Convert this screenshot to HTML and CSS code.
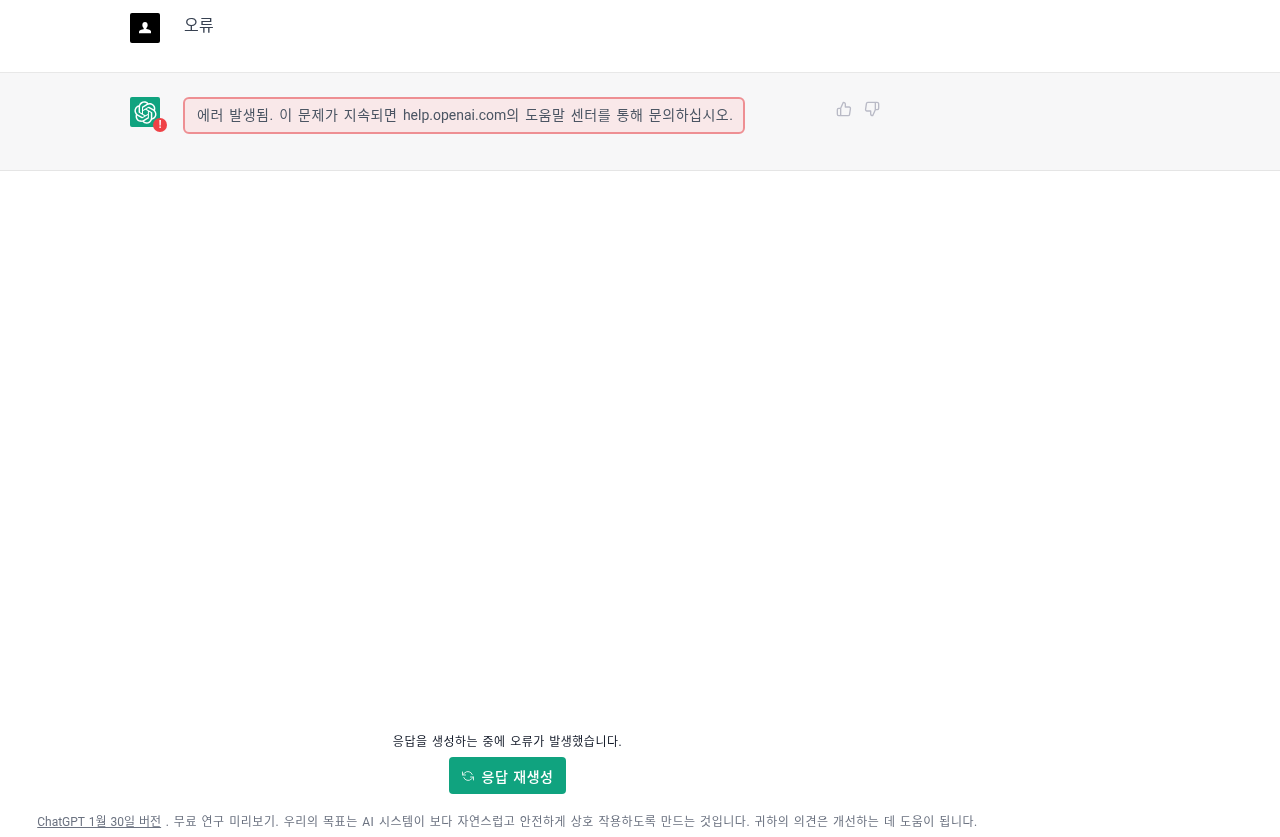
FILE: index.html
```html
<!DOCTYPE html>
<html lang="ko">
<head>
<meta charset="utf-8">
<title>ChatGPT</title>
<link rel="stylesheet" href="styles.css">
</head>
<body>
<div class="page">
  <section class="row row-user">
    <div class="col">
      <div class="avatar avatar-user">
        <svg viewBox="0 0 24 24" class="user-icon"><path d="M12 3c2.500 0 4 1.800 4 4.500 0 2-.8 3.700-2 4.500v1.500c3 .5 7 1.700 7 3.500V20H3v-2.500c0-1.800 4-3 7-3.500v-2c-1.200-.8-2-2.500-2-4.500C8 4.800 9.500 3 12 3z"/></svg>
      </div>
      <div class="user-text">오류</div>
    </div>
  </section>
  <section class="row row-bot">
    <div class="col">
      <div class="avatar avatar-bot">
        <svg viewBox="0 0 41 41" class="logo"><path d="M37.5324 16.8707C37.9808 15.5241 38.1363 14.0974 37.9886 12.6859C37.8409 11.2744 37.3934 9.91076 36.676 8.68622C35.6126 6.83404 33.9882 5.3676 32.0373 4.4985C30.0864 3.62941 27.9098 3.40259 25.8215 3.85078C24.8796 2.7893 23.7219 1.94125 22.4257 1.36341C21.1295 0.785575 19.7249 0.491269 18.3058 0.500197C16.1708 0.495044 14.0893 1.16803 12.3614 2.42214C10.6335 3.67624 9.34853 5.44666 8.6917 7.47815C7.30085 7.76286 5.98686 8.3414 4.8377 9.17505C3.68854 10.0087 2.73073 11.0782 2.02839 12.312C0.956464 14.1591 0.498905 16.2988 0.721698 18.4228C0.944492 20.5467 1.83612 22.5449 3.268 24.1293C2.81966 25.4759 2.66413 26.9026 2.81182 28.3141C2.95951 29.7256 3.40701 31.0892 4.12437 32.3138C5.18791 34.1659 6.8123 35.6322 8.76321 36.5013C10.7141 37.3704 12.8907 37.5973 14.9789 37.1492C15.9208 38.2107 17.0786 39.0587 18.3747 39.6366C19.6709 40.2144 21.0755 40.5087 22.4946 40.4998C24.6307 40.5054 26.7133 39.8321 28.4418 38.5772C30.1704 37.3223 31.4556 35.5506 32.1119 33.5179C33.5027 33.2332 34.8167 32.6547 35.9659 31.821C37.115 30.9874 38.0728 29.9178 38.7752 28.684C39.8458 26.8371 40.3023 24.6979 40.0789 22.5748C39.8556 20.4517 38.9639 18.4544 37.5324 16.8707ZM22.4978 37.8849C20.7443 37.8874 19.0459 37.2733 17.6994 36.1501C17.7601 36.117 17.8666 36.0586 17.936 36.0161L25.9004 31.4156C26.1003 31.3019 26.2663 31.137 26.3813 30.9378C26.4964 30.7386 26.5563 30.5124 26.5549 30.2825V19.0542L29.9213 20.998C29.9389 21.0068 29.9541 21.0198 29.9656 21.0359C29.977 21.052 29.9842 21.0707 29.9867 21.0902V30.3889C29.9842 32.375 29.1946 34.2791 27.7909 35.6841C26.3872 37.0892 24.4838 37.8806 22.4978 37.8849ZM6.39227 31.0064C5.51397 29.4888 5.19742 27.7107 5.49804 25.9832C5.55718 26.0187 5.66048 26.0818 5.73461 26.1244L13.699 30.7248C13.8975 30.8408 14.1233 30.902 14.3532 30.902C14.583 30.902 14.8088 30.8408 15.0073 30.7248L24.731 25.1103V28.9979C24.7321 29.0177 24.7283 29.0376 24.7199 29.0556C24.7115 29.0736 24.6988 29.0893 24.6829 29.1012L16.6317 33.7497C14.9096 34.7416 12.8643 35.0097 10.9447 34.4954C9.02506 33.9811 7.38785 32.7263 6.39227 31.0064ZM4.29707 13.6194C5.17156 12.0998 6.55279 10.9364 8.19885 10.3327C8.19885 10.4013 8.19491 10.5236 8.19491 10.6082V19.8154C8.19351 20.0452 8.25334 20.2712 8.36823 20.4703C8.48312 20.6693 8.64893 20.8341 8.84863 20.9479L18.5723 26.5624L15.206 28.5062C15.1894 28.5171 15.1703 28.5238 15.1505 28.5256C15.1307 28.5274 15.1107 28.5243 15.0924 28.5165L7.04046 23.8642C5.32135 22.8682 4.06716 21.2315 3.55289 19.3126C3.03862 17.3937 3.30624 15.3491 4.29707 13.6194ZM31.955 20.0556L22.2312 14.4411L25.5976 12.4981C25.6142 12.4872 25.6333 12.4805 25.6531 12.4787C25.6729 12.4769 25.6928 12.4801 25.7111 12.4879L33.7631 17.1364C34.9967 17.849 36.0017 18.8982 36.6606 20.1613C37.3194 21.4244 37.6047 22.849 37.4832 24.2684C37.3617 25.6878 36.8382 27.0432 35.9743 28.1759C35.1103 29.3086 33.9415 30.1717 32.6047 30.6641C32.6047 30.5947 32.6047 30.4733 32.6047 30.3889V21.1817C32.6066 20.9521 32.5474 20.7262 32.4332 20.5271C32.319 20.328 32.154 20.1629 31.955 20.0556ZM35.3055 15.0128C35.2464 14.9765 35.1431 14.9142 35.069 14.8717L27.1045 10.2712C26.906 10.1554 26.6803 10.0943 26.4504 10.0943C26.2206 10.0943 25.9948 10.1554 25.7963 10.2712L16.0726 15.8858V11.9982C16.0715 11.9783 16.0753 11.9585 16.0837 11.9405C16.0921 11.9225 16.1048 11.9068 16.1207 11.8949L24.1719 7.25025C25.4053 6.53903 26.8158 6.19376 28.2383 6.25482C29.6608 6.31589 31.0364 6.78077 32.2044 7.59508C33.3723 8.40939 34.2842 9.53945 34.8334 10.8531C35.3826 12.1667 35.5464 13.6095 35.3055 15.0128ZM14.2424 21.9419L10.8752 19.9981C10.8576 19.9893 10.8423 19.9763 10.8309 19.9602C10.8195 19.9441 10.8122 19.9254 10.8098 19.9058V10.6071C10.8107 9.18295 11.2173 7.78848 11.9819 6.58696C12.7466 5.38544 13.8377 4.42659 15.1275 3.82264C16.4173 3.21869 17.8524 2.99464 19.2649 3.1767C20.6775 3.35876 22.0089 3.93941 23.1034 4.85067C23.0427 4.88379 22.937 4.94215 22.8668 4.98473L14.9024 9.58517C14.7025 9.69878 14.5366 9.86356 14.4215 10.0626C14.3065 10.2616 14.2466 10.4877 14.2479 10.7175L14.2424 21.9419ZM16.071 17.9991L20.4018 15.4978L24.7325 17.9975V22.9985L20.4018 25.4983L16.071 22.9985V17.9991Z"/></svg>
        <span class="alert-badge">!</span>
      </div>
      <div class="error-box">에러 발생됨. 이 문제가 지속되면 <span class="latin">help.openai.com</span>의 도움말 센터를 통해 문의하십시오.</div>
      <div class="feedback">
        <svg viewBox="0 0 24 24" class="thumb"><path d="M14 9V5a3 3 0 0 0-3-3l-4 9v11h11.280a2 2 0 0 0 2-1.700l1.380-9a2 2 0 0 0-2-2.300zM7 22H4a2 2 0 0 1-2-2v-7a2 2 0 0 1 2-2h3"/></svg>
        <svg viewBox="0 0 24 24" class="thumb"><path d="M10 15v4a3 3 0 0 0 3 3l4-9V2H5.720a2 2 0 0 0-2 1.700l-1.380 9a2 2 0 0 0 2 2.300zm7-13h2.670A2.310 2.310 0 0 1 22 4v7a2.310 2.310 0 0 1-2.330 2H17"/></svg>
      </div>
    </div>
  </section>
  <div class="spacer"></div>
  <section class="composer">
    <p class="gen-error">응답을 생성하는 중에 오류가 발생했습니다.</p>
    <button class="regen" type="button">
      <svg viewBox="0 0 24 24" class="regen-icon"><polyline points="1 4 1 10 7 10"/><polyline points="23 20 23 14 17 14"/><path d="M20.490 9A9 9 0 0 0 5.640 5.640L1 10m22 4l-4.640 4.360A9 9 0 0 1 3.510 15"/></svg>
      응답 재생성
    </button>
  </section>
  <footer class="foot"><a class="ver" href="#">ChatGPT 1월 30일 버전</a> . 무료 연구 미리보기. 우리의 목표는 AI 시스템이 보다 자연스럽고 안전하게 상호 작용하도록 만드는 것입니다. 귀하의 의견은 개선하는 데 도움이 됩니다.</footer>
</div>
</body>
</html>
```
FILE: styles.css
```css
* { box-sizing: border-box; }
html, body { margin: 0; height: 100%; background: #fff; overflow: hidden; }
body {
  font-family: Roboto, "Noto Sans CJK KR", sans-serif;
  color: #374151;
}
.page {
  display: flex;
  flex-direction: column;
  height: 837px;
  filter: blur(0.4px);
}
.row { width: 100%; }
.row-user { height: 73px; border-bottom: 1px solid #e8e8e8; padding-top: 13px; }
.row-bot { height: 98px; background: #f7f7f8; border-bottom: 1px solid #e5e5e5; padding-top: 24px; }
.col { display: flex; width: 755px; margin-left: 130px; align-items: flex-start; }
.avatar { position: relative; width: 30px; height: 30px; border-radius: 2px; flex: none; display: flex; align-items: center; justify-content: center; }
.avatar-user { background: #000; }
.user-icon { width: 16px; height: 16px; fill: #fff; }
.avatar-bot { background: #10a37f; }
.logo { width: 23px; height: 23px; fill: #fff; }
.alert-badge {
  position: absolute;
  right: -7px;
  bottom: -5px;
  width: 14px;
  height: 14px;
  border-radius: 50%;
  background: #ef4146;
  color: #fff;
  font-size: 10px;
  font-weight: 700;
  line-height: 14px;
  text-align: center;
}
.user-text { margin-left: 24px; margin-top: 1px; font-size: 16px; line-height: 24px; color: #374151; letter-spacing: 0.3px; }
.error-box {
  margin-left: 23px;
  width: 562px;
  height: 37px;
  padding: 0 0 0 12px;
  border: 2px solid #ee8f93;
  border-radius: 6px;
  background: #f9e8e9;
  font-size: 14px;
  line-height: 33px;
  color: #4b5563;
  white-space: nowrap;
  letter-spacing: 0.52px;
  word-spacing: 1.5px;
}
.latin { letter-spacing: 0; }
.feedback { display: flex; gap: 12px; margin-left: auto; margin-right: 5px; margin-top: 4px; }
.thumb { width: 16px; height: 16px; fill: none; stroke: #b9bac6; stroke-width: 2; stroke-linecap: round; stroke-linejoin: round; }
.spacer { flex: 1; }
.composer { width: 1015px; display: flex; flex-direction: column; align-items: center; }
.gen-error { margin: 0 0 6px; font-size: 12px; line-height: 18px; color: #111827; letter-spacing: 0.5px; word-spacing: 1px; }
.regen {
  display: flex;
  align-items: center;
  gap: 8px;
  height: 37px;
  width: 117px;
  justify-content: center;
  border: 0;
  border-radius: 4px;
  background: #10a37f;
  color: #fff;
  font: inherit;
  font-size: 14px;
  font-weight: 500;
  letter-spacing: 0.5px;
  word-spacing: 1px;
}
.regen-icon { width: 12px; height: 12px; fill: none; stroke: #cfeee6; stroke-width: 2; stroke-linecap: round; stroke-linejoin: round; }
.foot { width: 1015px; margin-top: 19px; height: 24px; text-align: center; font-size: 12px; line-height: 18px; color: #6b7280; white-space: nowrap; letter-spacing: 0.54px; word-spacing: 1px; }
.ver { color: #6b7280; text-decoration: underline; letter-spacing: 0; }
```
